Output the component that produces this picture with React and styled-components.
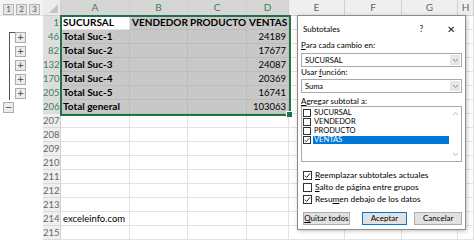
import React from 'react'
import styled, { createGlobalStyle } from 'styled-components'

const GREEN = '#217346'
const COLS = '43px 18px 69px 58px 59px 42px 56px 57px 56px 1fr'

const Global = createGlobalStyle`
  html, body { margin: 0; padding: 0; background: #fff; }
  body {
    width: 474px;
    height: 240px;
    overflow: hidden;
    font-family: Lato, "Liberation Sans", sans-serif;
  }
`

const Screen = styled.div`
  position: relative;
  width: 474px;
  height: 240px;
  overflow: hidden;
`

// Sheet
const HeaderRow = styled.div`
  display: grid;
  grid-template-columns: ${COLS};
  height: 16px;
`

const Row = styled.div`
  display: grid;
  grid-template-columns: ${COLS};
  height: 14px;
`

const LevelBar = styled.div`
  display: flex;
  gap: 2px;
  padding: 4px 0 0 3px;
  background: #f3f3f3;
  border-bottom: 1px solid #e2e2e2;
  box-sizing: border-box;
`

const LevelBtn = styled.div`
  width: 11px;
  height: 11px;
  box-sizing: border-box;
  border: 1px solid #b4b4b4;
  background: #e4e4e4;
  color: #555;
  font-size: 8px;
  line-height: 9px;
  text-align: center;
`

const Corner = styled.div`
  position: relative;
  background: #ececec;
  border-right: 1px solid #cfcfcf;
  border-bottom: 1px solid #cfcfcf;
  box-sizing: border-box;

  &::after {
    content: '';
    position: absolute;
    right: 2px;
    bottom: 2px;
    border-left: 9px solid transparent;
    border-bottom: 9px solid #c4c4c4;
  }
`

const ColHead = styled.div`
  background: ${p => (p.$sel ? '#d6d6d6' : '#efefef')};
  color: ${p => (p.$sel ? '#3f7d5a' : '#666')};
  border-right: 1px solid #d0d0d0;
  border-bottom: 1px solid ${p => (p.$sel ? GREEN : '#d0d0d0')};
  box-sizing: border-box;
  font-size: 10px;
  line-height: 15px;
  text-align: center;
`

const OutlineCell = styled.div`
  display: flex;
  align-items: stretch;
  padding-left: ${p => (p.$minus ? 3 : 9)}px;
  box-sizing: border-box;
`

const Guide = styled.div`
  width: 6px;
  margin-top: ${p => (p.$first ? 2 : 0)}px;
  border-left: ${p => (p.$on ? '1px solid #555' : 'none')};
  border-top: ${p => (p.$first ? '1px solid #555' : 'none')};
  box-sizing: border-box;
  flex: none;
`

const GroupBtn = styled.div`
  align-self: center;
  width: 11px;
  height: 11px;
  box-sizing: border-box;
  border: 1px solid #ababab;
  background: #ececec;
  color: #444;
  font-family: "DejaVu Sans", sans-serif;
  font-size: 9px;
  line-height: 9px;
  text-align: center;
`

const RowHead = styled.div`
  background: ${p => (p.$sel ? '#dedede' : '#efefef')};
  color: ${p => (p.$sel ? '#3f7d5a' : '#666')};
  border-right: 1px solid #cfcfcf;
  border-bottom: 1px solid #dadada;
  box-sizing: border-box;
  font-size: 9.5px;
  line-height: 13px;
  text-align: right;
  padding-right: 1px;
`

const Cell = styled.div`
  background: ${p => (p.$sel ? '#c8c8c8' : '#fff')};
  border-right: 1px solid ${p => (p.$sel ? '#bcbcbc' : '#e2e2e2')};
  border-bottom: 1px solid ${p => (p.$sel ? '#bcbcbc' : '#e2e2e2')};
  box-sizing: border-box;
  padding: 0 2px;
  color: #000;
  font-size: ${p => (p.$bold ? 10 : 9.5)}px;
  font-weight: ${p => (p.$bold ? 700 : 400)};
  line-height: 13px;
  white-space: nowrap;
  text-align: ${p => (p.$num ? 'right' : 'left')};
`

const Selection = styled.div`
  position: absolute;
  left: 60px;
  top: 15px;
  width: 231px;
  height: 101px;
  border: 2px solid ${GREEN};
  box-sizing: border-box;
  pointer-events: none;

  &::after {
    content: '';
    position: absolute;
    right: -4px;
    bottom: -4px;
    width: 5px;
    height: 5px;
    background: ${GREEN};
    border: 1px solid #fff;
  }
`

// Dialog
const Dialog = styled.div`
  position: absolute;
  left: 297px;
  top: 15px;
  width: 169px;
  height: 215px;
  box-sizing: border-box;
  background: #fff;
  border: 1px solid #8c8c8c;
  box-shadow: 1px 1px 4px rgba(0, 0, 0, 0.25);
  display: flex;
  flex-direction: column;
  font-size: 8px;
  color: #000;
`

const TitleBar = styled.div`
  display: flex;
  align-items: center;
  height: 24px;
  padding: 2px 0 0 5px;
  box-sizing: border-box;
`

const Title = styled.div`
  flex: 1;
  font-size: 8px;
`

const TitleBtn = styled.div`
  width: 29px;
  text-align: center;
  font-size: ${p => (p.$close ? 10 : 8.5)}px;
  color: #222;
`

const Body = styled.div`
  display: flex;
  flex-direction: column;
  padding: 0 3px 0 3px;
`

const Label = styled.div`
  height: 10px;
  line-height: 10px;
  margin-top: ${p => p.$mt || 0}px;
`

const Select = styled.div`
  display: flex;
  align-items: center;
  height: 14px;
  margin-top: ${p => p.$mt || 0}px;
  border: 1px solid #a9a9a9;
  box-sizing: border-box;
  padding-left: 3px;
  font-size: 7.5px;
`

const SelectText = styled.div`
  flex: 1;
`

const Arrow = styled.div`
  width: 10px;
  height: 10px;
  margin-right: 1px;
  background: #e6e6e6;
  display: flex;
  align-items: center;
  justify-content: center;
`

const ListBox = styled.div`
  display: flex;
  height: 56px;
  border: 1px solid #a9a9a9;
  box-sizing: border-box;
`

const Items = styled.div`
  flex: 1;
  padding: 1px 0 0 1px;
`

const Item = styled.div`
  display: flex;
  align-items: center;
  height: 9px;
  gap: 2px;
  font-size: 7.5px;
`

const ItemText = styled.div`
  flex: 1;
  height: 8px;
  line-height: 8px;
  padding-left: 1px;
  background: ${p => (p.$active ? '#0078d7' : 'transparent')};
  color: ${p => (p.$active ? '#fff' : '#000')};
`

const ScrollBar = styled.div`
  width: 12px;
  display: flex;
  flex-direction: column;
  justify-content: space-between;
  align-items: center;
  padding: 4px 0 4px;
`

const Box = styled.div`
  width: ${p => p.$size}px;
  height: ${p => p.$size}px;
  flex: none;
  box-sizing: border-box;
  border: 1px solid #333;
  background: #fff;
  display: flex;
  align-items: center;
  justify-content: center;
`

const Options = styled.div`
  display: flex;
  flex-direction: column;
  margin-top: 7px;
`

const Option = styled.div`
  display: flex;
  align-items: center;
  gap: 3px;
  height: 12px;
  padding-left: 2px;
  font-size: 8.3px;
`

const Buttons = styled.div`
  display: flex;
  margin-top: 7px;
  padding-left: 2px;
`

const Btn = styled.div`
  width: ${p => p.$w}px;
  height: 13px;
  margin-left: ${p => p.$ml || 0}px;
  box-sizing: border-box;
  background: #e1e1e1;
  border: 1px solid ${p => (p.$primary ? '#0078d7' : '#adadad')};
  text-align: center;
  line-height: 11px;
`

const Chevron = ({ up, color = '#888' }) => (
  <svg width="7" height="5" viewBox="0 0 7 5">
    <path d={up ? 'M1 4 L3.5 1.5 L6 4' : 'M1 1 L3.5 3.5 L6 1'} fill="none" stroke={color} strokeWidth="1" />
  </svg>
)

const Check = ({ checked, size = 9 }) => (
  <Box $size={size}>
    {checked && (
      <svg width={size - 2} height={size - 2} viewBox="0 0 8 8">
        <path d="M1 4.2 L3 6.2 L7 1.5" fill="none" stroke="#222" strokeWidth="1.1" />
      </svg>
    )}
  </Box>
)

const rows = [
  { n: 1, a: 'SUCURSAL', b: 'VENDEDOR', c: 'PRODUCTO', d: 'VENTAS', sel: true, bold: true, dBold: true },
  { n: 46, a: 'Total Suc-1', d: '24189', sel: true, bold: true, group: 'plus', first: true },
  { n: 82, a: 'Total Suc-2', d: '17677', sel: true, bold: true, group: 'plus' },
  { n: 132, a: 'Total Suc-3', d: '24087', sel: true, bold: true, group: 'plus' },
  { n: 170, a: 'Total Suc-4', d: '20369', sel: true, bold: true, group: 'plus' },
  { n: 205, a: 'Total Suc-5', d: '16741', sel: true, bold: true, group: 'plus' },
  { n: 206, a: 'Total general', d: '103063', sel: true, bold: true, group: 'minus' },
  { n: 207 }, { n: 208 }, { n: 209 }, { n: 210 }, { n: 211 }, { n: 212 }, { n: 213 },
  { n: 214, a: 'exceleinfo.com' },
  { n: 215 },
]

const Outline = ({ row }) => {
  if (row.group === 'minus') {
    return (
      <OutlineCell $minus>
        <GroupBtn>−</GroupBtn>
      </OutlineCell>
    )
  }
  return (
    <OutlineCell>
      <Guide $on={!!row.group} $first={row.first} />
      {row.group === 'plus' && <GroupBtn>+</GroupBtn>}
    </OutlineCell>
  )
}

const App = () => {
  return (
    <Screen>
      <Global />
      <HeaderRow>
        <LevelBar>
          <LevelBtn>1</LevelBtn>
          <LevelBtn>2</LevelBtn>
          <LevelBtn>3</LevelBtn>
        </LevelBar>
        <Corner />
        {['A', 'B', 'C', 'D', 'E', 'F', 'G', 'H'].map((l, i) => (
          <ColHead key={l} $sel={i < 4}>{l}</ColHead>
        ))}
      </HeaderRow>
      {rows.map(r => (
        <Row key={r.n}>
          <Outline row={r} />
          <RowHead $sel={r.sel}>{r.n}</RowHead>
          <Cell $sel={r.sel && r.n !== 1} $bold={r.bold}>{r.a}</Cell>
          <Cell $sel={r.sel} $bold={r.bold}>{r.b}</Cell>
          <Cell $sel={r.sel} $bold={r.bold}>{r.c}</Cell>
          <Cell $sel={r.sel} $bold={r.dBold} $num={!r.dBold}>{r.d}</Cell>
          <Cell />
          <Cell />
          <Cell />
          <Cell />
        </Row>
      ))}
      <Selection />

      <Dialog>
        <TitleBar>
          <Title>Subtotales</Title>
          <TitleBtn>?</TitleBtn>
          <TitleBtn $close>✕</TitleBtn>
        </TitleBar>
        <Body>
          <Label><u>P</u>ara cada cambio en:</Label>
          <Select $mt={3}>
            <SelectText>SUCURSAL</SelectText>
            <Arrow><Chevron /></Arrow>
          </Select>
          <Label>Usar <u>f</u>unción:</Label>
          <Select $mt={2}>
            <SelectText>Suma</SelectText>
            <Arrow><Chevron /></Arrow>
          </Select>
          <Label $mt={3}><u>A</u>gregar subtotal a:</Label>
          <ListBox>
            <Items>
              {['SUCURSAL', 'VENDEDOR', 'PRODUCTO', 'VENTAS'].map(name => (
                <Item key={name}>
                  <Check size={8} checked={name === 'VENTAS'} />
                  <ItemText $active={name === 'VENTAS'}>{name}</ItemText>
                </Item>
              ))}
            </Items>
            <ScrollBar>
              <Chevron up color="#b5b5b5" />
              <Chevron color="#b5b5b5" />
            </ScrollBar>
          </ListBox>
          <Options>
            <Option><Check checked /><span><u>R</u>eemplazar subtotales actuales</span></Option>
            <Option><Check /><span><u>S</u>alto de página entre grupos</span></Option>
            <Option><Check checked /><span>Resu<u>m</u>en debajo de los datos</span></Option>
          </Options>
          <Buttons>
            <Btn $w={47}><u>Q</u>uitar todos</Btn>
            <Btn $w={46} $ml={12} $primary>Aceptar</Btn>
            <Btn $w={48} $ml={7}>Cancelar</Btn>
          </Buttons>
        </Body>
      </Dialog>
    </Screen>
  )
}

export default App
